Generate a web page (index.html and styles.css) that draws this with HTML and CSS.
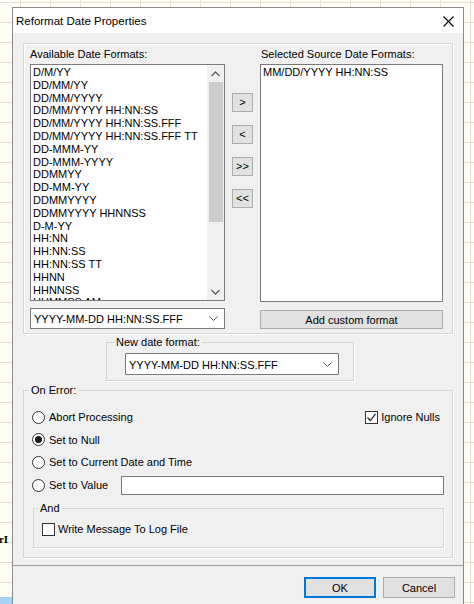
FILE: index.html
```html
<!DOCTYPE html>
<html lang="en">
<head>
    <meta charset="UTF-8">
    <meta name="viewport" content="width=device-width, initial-scale=1.0">
    <title>Reformat Date Properties</title>
    <link rel="stylesheet" href="styles.css">
</head>
<body>
    <div class="desk">
        <!-- sheet cells behind the dialog -->
        <span class="cell-text">HeaderI</span>
        <div class="cell-selected"></div>

        <div class="dialog">
            <div class="titlebar">
                <span class="title">Reformat Date Properties</span>
                <svg class="close" width="11" height="11" viewBox="0 0 11 11">
                    <path d="M0.5 0.5 L10.5 10.5 M10.5 0.5 L0.5 10.5" stroke="#000" stroke-width="1.1" fill="none"/>
                </svg>
            </div>

            <div class="formats">
                <div class="col col-left">
                    <div class="label">Available Date Formats:</div>
                    <div class="listbox">
                        <ul class="items">
                            <li>D/M/YY</li>
                            <li>DD/MM/YY</li>
                            <li>DD/MM/YYYY</li>
                            <li>DD/MM/YYYY HH:NN:SS</li>
                            <li>DD/MM/YYYY HH:NN:SS.FFF</li>
                            <li>DD/MM/YYYY HH:NN:SS.FFF TT</li>
                            <li>DD-MMM-YY</li>
                            <li>DD-MMM-YYYY</li>
                            <li>DDMMYY</li>
                            <li>DD-MM-YY</li>
                            <li>DDMMYYYY</li>
                            <li>DDMMYYYY HHNNSS</li>
                            <li>D-M-YY</li>
                            <li>HH:NN</li>
                            <li>HH:NN:SS</li>
                            <li>HH:NN:SS TT</li>
                            <li>HHNN</li>
                            <li>HHNNSS</li>
                            <li>HHMMSS AM</li>
                        </ul>
                        <div class="scrollbar">
                            <span class="sb-arrow">
                                <svg width="9" height="6" viewBox="0 0 9 6"><path d="M0.5 5 L4.5 1 L8.5 5" stroke="#606060" stroke-width="1.3" fill="none"/></svg>
                            </span>
                            <span class="sb-thumb"></span>
                            <span class="sb-track"></span>
                            <span class="sb-arrow">
                                <svg width="9" height="6" viewBox="0 0 9 6"><path d="M0.5 1 L4.5 5 L8.5 1" stroke="#606060" stroke-width="1.3" fill="none"/></svg>
                            </span>
                        </div>
                    </div>
                    <div class="combo">
                        <span>YYYY-MM-DD HH:NN:SS.FFF</span>
                        <svg width="9" height="5" viewBox="0 0 9 5"><path d="M0.5 0.5 L4.5 4.5 L8.5 0.5" stroke="#555" stroke-width="1" fill="none"/></svg>
                    </div>
                </div>

                <div class="movers">
                    <button class="btn small">&gt;</button>
                    <button class="btn small">&lt;</button>
                    <button class="btn small">&gt;&gt;</button>
                    <button class="btn small">&lt;&lt;</button>
                </div>

                <div class="col col-right">
                    <div class="label">Selected Source Date Formats:</div>
                    <div class="listbox tall">
                        <ul class="items">
                            <li>MM/DD/YYYY HH:NN:SS</li>
                        </ul>
                    </div>
                    <button class="btn add-custom">Add custom format</button>
                </div>
            </div>

            <fieldset class="group new-format">
                <legend>New date format:</legend>
                <div class="new-format-body">
                    <div class="combo">
                        <span>YYYY-MM-DD HH:NN:SS.FFF</span>
                        <svg width="9" height="5" viewBox="0 0 9 5"><path d="M0.5 0.5 L4.5 4.5 L8.5 0.5" stroke="#555" stroke-width="1" fill="none"/></svg>
                    </div>
                </div>
            </fieldset>

            <fieldset class="group on-error">
                <legend>On Error:</legend>
                <div class="on-error-body">
                    <div class="row">
                        <label class="choice"><span class="radio"></span>Abort Processing</label>
                        <label class="choice ignore-nulls"><span class="check checked">
                            <svg width="11" height="11" viewBox="0 0 11 11"><path d="M1.5 5.5 L4.3 8.5 L9.5 1.8" stroke="#222" stroke-width="1.2" fill="none"/></svg>
                        </span>Ignore Nulls</label>
                    </div>
                    <div class="row">
                        <label class="choice"><span class="radio selected"></span>Set to Null</label>
                    </div>
                    <div class="row">
                        <label class="choice"><span class="radio"></span>Set to Current Date and Time</label>
                    </div>
                    <div class="row">
                        <label class="choice"><span class="radio"></span>Set to Value</label>
                        <input class="value-input" type="text">
                    </div>

                    <fieldset class="group and-group">
                        <legend>And</legend>
                        <div class="row and-row">
                            <label class="choice"><span class="check"></span>Write Message To Log File</label>
                        </div>
                    </fieldset>
                </div>
            </fieldset>

            <div class="footer">
                <button class="btn wide ok">OK</button>
                <button class="btn wide">Cancel</button>
            </div>
        </div>
    </div>
</body>
</html>
```

FILE: styles.css
```css
:root {
    --face: #f0f0f0;
    --btn: #e1e1e1;
    --btn-border: #adadad;
    --field-border: #7a7a7a;
    --group-line: #d5d5d5;
    --accent: #0078d7;
    --sheet: #fffef6;
    --sheet-line: #e4dfcb;
}

* {
    margin: 0;
    padding: 0;
    box-sizing: border-box;
}

body {
    font-family: "Liberation Sans", Arial, sans-serif;
    font-size: 11px;
    color: #000;
    overflow: hidden;
    height: 604px;
}

.desk {
    position: relative;
    height: 604px;
    overflow: hidden;
    padding: 7px 0 0 12px;
    background-color: var(--sheet);
    background-image:
        linear-gradient(var(--sheet-line) 1px, transparent 1px),
        linear-gradient(90deg, var(--sheet-line) 1px, transparent 1px);
    background-size: 30px 20px;
    background-position: 20px 2px;
}

.cell-text {
    position: absolute;
    left: -31px;
    top: 533px;
    font-family: "Liberation Serif", serif;
    font-weight: bold;
    font-size: 11px;
}

.cell-selected {
    position: absolute;
    left: 0;
    top: 597px;
    width: 12px;
    height: 7px;
    background: #a9d1f3;
}

/* dialog window, runs on below the sheet's visible area */
.dialog {
    position: relative;
    width: 452px;
    height: 597px;
    background: var(--face);
    border: 1px solid #8c8c8c;
    border-bottom: none;
}

.titlebar {
    display: flex;
    align-items: center;
    justify-content: space-between;
    height: 25px;
    padding: 0 9px 0 3px;
    background: #fff;
}

.title {
    font-size: 11.5px;
}

.close {
    margin-top: 1px;
}

/* date format pickers */
.formats {
    display: flex;
    width: 430px;
    margin: 10px 0 0 10px;
    padding: 3px 9px 4px 6px;
    border: 1px solid var(--group-line);
    box-shadow: 1px 1px 0 #fff, inset 1px 1px 0 #fff;
}

.col {
    display: flex;
    flex-direction: column;
}

.col-left {
    width: 195px;
}

.col-right {
    width: 183px;
}

.label {
    line-height: 15px;
    margin-bottom: 2px;
}

.col-right .label {
    padding-left: 1px;
}

.listbox {
    display: flex;
    height: 237px;
    background: #fff;
    border: 1px solid var(--field-border);
}

.listbox.tall {
    height: 238px;
}

.items {
    flex: 1;
    list-style: none;
    overflow: hidden;
    padding: 1px 0 0 2px;
    line-height: 12.8px;
    white-space: nowrap;
}

.scrollbar {
    display: flex;
    flex-direction: column;
    width: 17px;
    background: var(--face);
}

.sb-arrow {
    display: flex;
    align-items: center;
    justify-content: center;
    height: 17px;
}

.sb-thumb {
    height: 140px;
    margin: 0 1px 0 2px;
    background: #cdcdcd;
}

.sb-track {
    flex: 1;
}

.combo {
    display: flex;
    align-items: center;
    justify-content: space-between;
    height: 21px;
    margin-top: 7px;
    padding: 0 6px 0 3px;
    background: #fff;
    border: 1px solid var(--field-border);
}

.combo span {
    padding-top: 1px;
}

.movers {
    display: flex;
    flex-direction: column;
    gap: 13px;
    padding-top: 46px;
    margin: 0 7px;
}

.btn {
    font-family: inherit;
    font-size: 11px;
    color: #000;
    background: var(--btn);
    border: 1px solid var(--btn-border);
}

.btn.small {
    width: 21px;
    height: 19px;
    line-height: 15px;
}

.add-custom {
    height: 19px;
    margin-top: 8px;
}

/* group boxes */
.group {
    border: 1px solid var(--group-line);
    box-shadow: 1px 1px 0 #fff;
}

.group legend {
    padding: 0 2px;
    line-height: 14px;
}

.new-format {
    width: 248px;
    margin: 1px 0 0 93px;
}

.new-format legend {
    margin-left: 7px;
}

.new-format-body {
    padding: 0 14px 5px 18px;
}

.new-format .combo {
    height: 22px;
    margin-top: 4px;
}

.on-error {
    width: 430px;
    margin: 2px 0 0 10px;
}

.on-error legend {
    margin-left: 5px;
}

.on-error-body {
    padding: 9px 0 9px 0;
}

.row {
    display: flex;
    align-items: center;
    height: 22.6px;
    padding-left: 8px;
}

.choice {
    display: flex;
    align-items: center;
}

.radio {
    width: 13px;
    height: 13px;
    margin-right: 4px;
    border: 1px solid #333;
    border-radius: 50%;
    background: #fff;
    display: flex;
    align-items: center;
    justify-content: center;
}

.radio.selected::after {
    content: "";
    width: 7px;
    height: 7px;
    border-radius: 50%;
    background: #1a1a1a;
}

.check {
    display: flex;
    align-items: center;
    justify-content: center;
    width: 13px;
    height: 13px;
    margin-right: 3px;
    border: 1px solid #333;
    background: #fff;
}

.ignore-nulls {
    margin-left: auto;
    margin-right: 12px;
}

.value-input {
    width: 323px;
    height: 19px;
    margin-left: auto;
    margin-right: 8px;
    border: 1px solid var(--field-border);
    background: #fff;
    outline: none;
}

.and-group {
    width: 411px;
    margin: 5px 0 0 9px;
}

.and-group legend {
    margin-left: 4px;
}

.and-row {
    height: 20px;
    margin: 4px 0 8px;
}

/* dialog buttons */
.footer {
    display: flex;
    justify-content: flex-end;
    gap: 7px;
    margin-top: 7px;
    padding: 11px 8px 0 0;
    border-top: 1px solid #a0a0a0;
}

.btn.wide {
    width: 72px;
    height: 21px;
}

.btn.ok {
    border-color: var(--accent);
    box-shadow: inset 0 0 0 1px var(--accent);
}
```
